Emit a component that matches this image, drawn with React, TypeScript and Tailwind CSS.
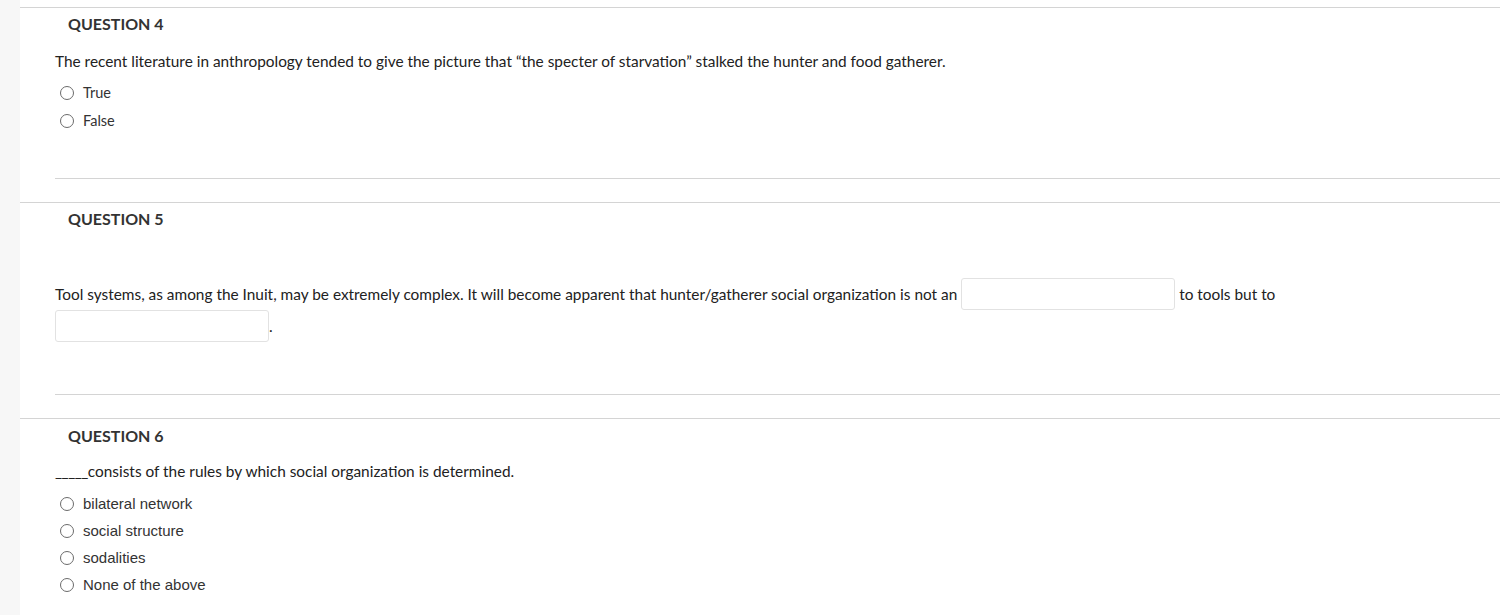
const body = '"Lato", "Open Sans", sans-serif';

function Radio(properties: { label: string; arial?: boolean }) {
  return (
    <label className="flex items-center h-5 gap-[9px] pl-[5px]">
      <span className="inline-block w-[14px] h-[14px] rounded-full border border-[#6b6b6b] bg-white" />
      <span
        className={
          properties.arial
            ? "text-[15px] text-[#333] font-['Liberation_Sans',Arial,sans-serif]"
            : "text-[14.5px] text-[#333] font-['Lato',sans-serif]"
        }
      >
        {properties.label}
      </span>
    </label>
  );
}

function Heading(properties: { title: string }) {
  return (
    <h2 className="pl-[13px] h-5 leading-5 text-[16px] font-bold text-[#333] font-['Lato',sans-serif]">
      {properties.title}
    </h2>
  );
}

export default function App() {
  return (
    <div className="flex w-[1500px] h-[615px] overflow-hidden bg-white">
      <aside className="w-[20px] shrink-0 bg-[#f7f7f7]" />

      <main className="flex-1 pt-[7px] text-[#222]" style={{ fontFamily: body }}>
        <section className="border-t border-[#d4d4d4] pt-[6px]">
          <div className="pl-[35px]">
            <Heading title="QUESTION 4" />
            <p className="mt-[17px] h-5 leading-5 text-[15.4px] text-[#222]">
              The recent literature in anthropology tended to give the picture that “the specter of
              starvation” stalked the hunter and food gatherer.
            </p>
            <div className="mt-[12px] flex flex-col gap-[8px]">
              <Radio label="True" />
              <Radio label="False" />
            </div>
            <hr className="mt-[47px] border-[#d4d4d4]" />
          </div>
        </section>

        <section className="mt-[23px] border-t border-[#d4d4d4] pt-[6px]">
          <div className="pl-[35px]">
            <Heading title="QUESTION 5" />
            <p className="mt-[49px] w-[1230px] text-[15.4px] leading-[32px] text-[#222]">
              Tool systems, as among the Inuit, may be extremely complex. It will become apparent that
              hunter/gatherer social organization is not an{" "}
              <input
                type="text"
                aria-label="blank 1"
                className="inline-block align-top w-[214px] h-[32px] rounded-[3px] border border-[#e2e2e2] bg-white"
              />{" "}
              to tools but to{" "}
              <input
                type="text"
                aria-label="blank 2"
                className="inline-block align-top w-[214px] h-[32px] rounded-[3px] border border-[#e2e2e2] bg-white"
              />
              .
            </p>
            <hr className="mt-[52px] border-[#d4d4d4]" />
          </div>
        </section>

        <section className="mt-[23px] border-t border-[#d4d4d4] pt-[7px]">
          <div className="pl-[35px]">
            <Heading title="QUESTION 6" />
            <p className="mt-[15px] h-5 leading-5 text-[15.4px] text-[#222]">
              <span className="tracking-[-0.5px]">_____</span>consists of the rules by which social
              organization is determined.
            </p>
            <div className="mt-[13px] flex flex-col gap-[7px]">
              <Radio arial label="bilateral network" />
              <Radio arial label="social structure" />
              <Radio arial label="sodalities" />
              <Radio arial label="None of the above" />
            </div>
          </div>
        </section>
      </main>
    </div>
  );
}
